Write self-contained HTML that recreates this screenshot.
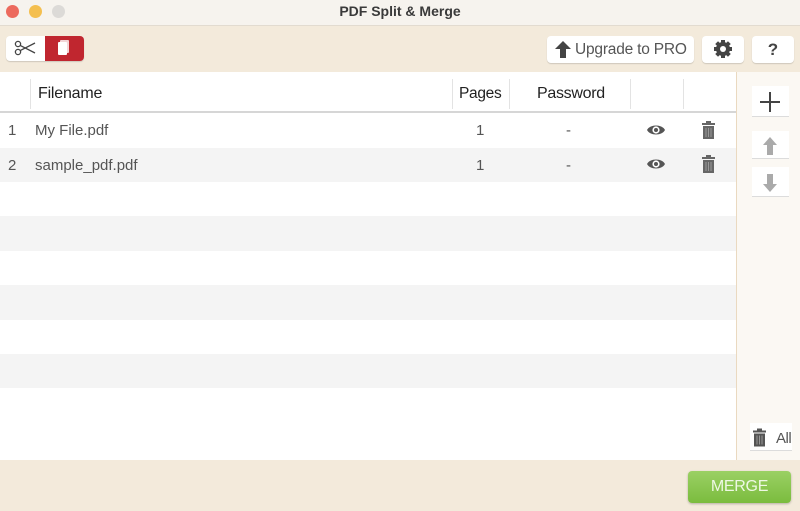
<!DOCTYPE html><html><head><style>
*{margin:0;padding:0;box-sizing:border-box}
body{width:800px;height:511px;overflow:hidden;font-family:"Liberation Sans",sans-serif;background:#f3eadb;position:relative;color:#333}
.abs{position:absolute}
.tb{top:0;left:0;width:800px;height:26px;background:#f6f3ee;border-bottom:1px solid #e2dbd0;text-align:center;font-weight:bold;font-size:14px;line-height:22px;color:#3a3a3a}
.dot{top:5px;width:13px;height:13px;border-radius:50%}
.btn{background:#fff;border-radius:4px;box-shadow:0 1px 1px rgba(0,0,0,.15)}
.row{left:0;width:736px;font-size:15px;color:#555}
.row span{position:absolute;top:0}
.hd{border-left:1px solid #e3e3e3;height:30px;top:79px}
</style></head><body>
<div class="abs tb">PDF Split &amp; Merge</div>
<div class="abs dot" style="left:6px;background:#ec6a5e"></div>
<div class="abs dot" style="left:29px;background:#f4bf4f"></div>
<div class="abs dot" style="left:52px;background:#dcdad7"></div>
<div class="abs btn" style="left:6px;top:36px;width:78px;height:25px"></div>
<div class="abs" style="left:45px;top:36px;width:39px;height:25px;background:#c0262f;border-radius:0 4px 4px 0"></div>
<svg class="abs" style="left:14px;top:40px" width="22" height="16" viewBox="0 0 22 16"><circle cx="4" cy="4" r="2.6" fill="none" stroke="#444" stroke-width="1.3"/><circle cx="4" cy="12" r="2.6" fill="none" stroke="#444" stroke-width="1.3"/><path d="M6.2 5.4L21 13M6.2 10.6L21 3" stroke="#444" stroke-width="1.3"/></svg>
<div class="abs" style="left:60px;top:40px;width:9px;height:13px;background:#f3d5d7;border-radius:1px"></div>
<div class="abs" style="left:58px;top:42px;width:9px;height:13px;background:#fff;border-radius:1px"></div>
<div class="abs btn" style="left:547px;top:36px;width:147px;height:27px;font-size:15.5px;line-height:27px;color:#555;padding-left:28px;white-space:nowrap;letter-spacing:-0.2px">Upgrade to PRO</div>
<svg class="abs" style="left:555px;top:41px" width="16" height="17" viewBox="0 0 16 17"><path d="M8 0L16 8H11V17H5V8H0Z" fill="#444"/></svg>
<div class="abs btn" style="left:702px;top:36px;width:42px;height:27px"></div>
<svg class="abs" style="left:713px;top:39px" width="20" height="20" viewBox="0 0 20 20"><g fill="#444"><circle cx="10" cy="10" r="7"/><g id="t"><rect x="8" y="1" width="4" height="18"/><rect x="1" y="8" width="18" height="4"/></g><use href="#t" transform="rotate(45 10 10)"/></g><circle cx="10" cy="10" r="3" fill="#fff"/></svg>
<div class="abs btn" style="left:752px;top:36px;width:42px;height:27px;text-align:center;font-size:17px;font-weight:bold;line-height:27px;color:#444">?</div>
<div class="abs" style="left:0;top:72px;width:736px;height:388px;background:#fff"></div>
<div class="abs" style="left:0;top:148px;width:736px;height:34px;background:#f4f4f4"></div>
<div class="abs" style="left:0;top:216px;width:736px;height:35px;background:#f4f4f4"></div>
<div class="abs" style="left:0;top:285px;width:736px;height:35px;background:#f4f4f4"></div>
<div class="abs" style="left:0;top:354px;width:736px;height:34px;background:#f4f4f4"></div>
<div class="abs" style="left:0;top:111px;width:736px;height:2px;background:#d6d6d6"></div>
<div class="abs hd" style="left:30px"></div><div class="abs hd" style="left:452px"></div><div class="abs hd" style="left:509px"></div><div class="abs hd" style="left:630px"></div><div class="abs hd" style="left:683px"></div>
<div class="abs" style="left:38px;top:85px;font-size:16px;color:#222;letter-spacing:-0.2px">Filename</div>
<div class="abs" style="left:459px;top:85px;font-size:15.5px;color:#222;letter-spacing:-0.3px">Pages</div>
<div class="abs" style="left:537px;top:85px;font-size:16px;color:#222;letter-spacing:-0.3px">Password</div>
<div class="abs row" style="top:122px"><span style="left:8px">1</span><span style="left:35px">My File.pdf</span><span style="left:476px">1</span><span style="left:566px">-</span></div>
<div class="abs row" style="top:157px"><span style="left:8px">2</span><span style="left:35px">sample_pdf.pdf</span><span style="left:476px">1</span><span style="left:566px">-</span></div>
<svg class="abs" style="left:646px;top:123px" width="20" height="14" viewBox="0 0 20 14"><path d="M1 7C4 1 16 1 19 7C16 13 4 13 1 7Z" fill="#555"/><circle cx="10" cy="7" r="3.6" fill="#fff"/><circle cx="10" cy="7" r="2" fill="#555"/></svg>
<svg class="abs" style="left:646px;top:157px" width="20" height="14" viewBox="0 0 20 14"><path d="M1 7C4 1 16 1 19 7C16 13 4 13 1 7Z" fill="#555"/><circle cx="10" cy="7" r="3.6" fill="#fff"/><circle cx="10" cy="7" r="2" fill="#555"/></svg>
<svg class="abs" style="left:701px;top:121px" width="15" height="18" viewBox="0 0 15 18"><rect x="1" y="2" width="13" height="2" fill="#666"/><rect x="5" y="0" width="5" height="2" fill="#666"/><rect x="2" y="5" width="11" height="13" fill="#666"/><path d="M5 7v9M7.5 7v9M10 7v9" stroke="#999" stroke-width="1"/></svg>
<svg class="abs" style="left:701px;top:155px" width="15" height="18" viewBox="0 0 15 18"><rect x="1" y="2" width="13" height="2" fill="#666"/><rect x="5" y="0" width="5" height="2" fill="#666"/><rect x="2" y="5" width="11" height="13" fill="#666"/><path d="M5 7v9M7.5 7v9M10 7v9" stroke="#999" stroke-width="1"/></svg>
<div class="abs" style="left:736px;top:72px;width:64px;height:388px;background:#fbf8f3;border-left:1px solid #ead9c0"></div>
<div class="abs" style="left:752px;top:86px;width:37px;height:31px;border-bottom:1px solid #dcdcdc;background:#fff"></div>
<svg class="abs" style="left:760px;top:92px" width="20" height="20" viewBox="0 0 20 20"><path d="M10 0V20M0 10H20" stroke="#444" stroke-width="2"/></svg>
<div class="abs" style="left:752px;top:131px;width:37px;height:28px;border-bottom:1px solid #dcdcdc;background:#fff"></div>
<svg class="abs" style="left:762px;top:137px" width="16" height="18" viewBox="0 0 16 18"><path d="M8 0L15 8H11V18H5V8H1Z" fill="#aaa"/></svg>
<div class="abs" style="left:752px;top:167px;width:37px;height:30px;border-bottom:1px solid #dcdcdc;background:#fff"></div>
<svg class="abs" style="left:762px;top:174px" width="16" height="18" viewBox="0 0 16 18"><path d="M8 18L15 10H11V0H5V10H1Z" fill="#aaa"/></svg>
<div class="abs" style="left:750px;top:423px;width:42px;height:28px;border-bottom:1px solid #dcdcdc;background:#fff"></div>
<svg class="abs" style="left:752px;top:428px" width="15" height="19" viewBox="0 0 15 18"><rect x="1" y="2" width="13" height="2" fill="#555"/><rect x="5" y="0" width="5" height="2" fill="#555"/><rect x="2" y="5" width="11" height="13" fill="#555"/><path d="M5 7v9M7.5 7v9M10 7v9" stroke="#999" stroke-width="1"/></svg>
<div class="abs" style="left:776px;top:430px;font-size:15px;color:#555;letter-spacing:-0.5px">All</div>
<div class="abs" style="left:688px;top:471px;width:103px;height:32px;border-radius:4px;background:linear-gradient(#9bd064,#7bbc3e);box-shadow:0 1px 2px rgba(0,0,0,.25);color:#eef8e4;font-size:16px;text-align:center;line-height:32px;letter-spacing:-0.3px">MERGE</div>
</body></html>
